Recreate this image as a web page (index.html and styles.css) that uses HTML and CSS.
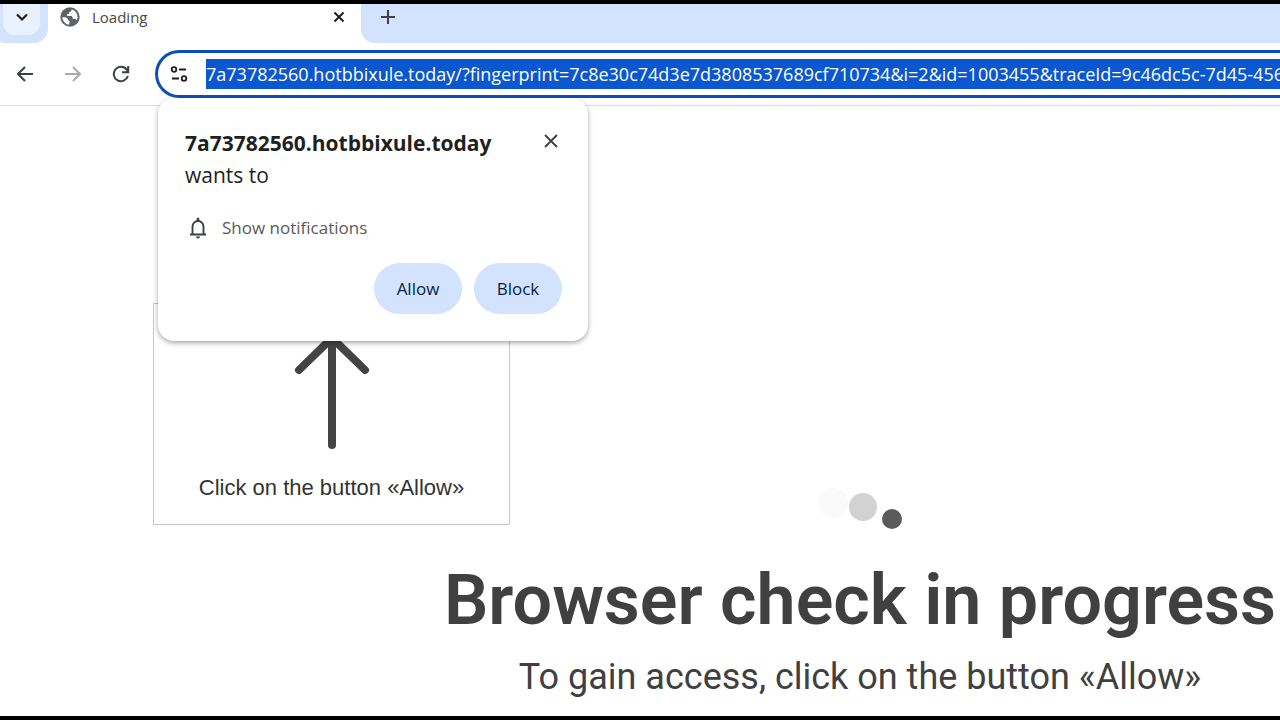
FILE: index.html
```html
<!DOCTYPE html>
<html lang="en">
<head>
    <meta charset="UTF-8">
    <meta name="viewport" content="width=device-width, initial-scale=1.0">
    <title>Loading</title>
    <link rel="stylesheet" href="styles.css">
</head>
<body>
    <div class="window">
        <header class="tab-strip">
            <div class="strip-left">
                <button class="tab-search" aria-label="Search tabs">
                    <svg width="14" height="14" viewBox="0 0 14 14"><path d="M2 4.5l5 5 5-5" fill="none" stroke="#1f1f1f" stroke-width="2.2"/></svg>
                </button>
            </div>
            <div class="tab">
                <svg width="20" height="20" viewBox="0 0 20 20">
                    <circle cx="10" cy="10" r="9.7" fill="#5f6368"/>
                    <path d="M11.5 2.3c.2 1.700-.6 2.500-2 2.700-.4 1.500-.8 2.200-2.300 2.200v1.900h4.600c.8.600.9 1.700.8 2.600h2c1.300 0 1.800.9 2 1.900A7.800 7.800 0 0 0 11.500 2.300zM2.300 10.300c2.500-.2 4.500.3 5.200 1.200.4.700.2 1.600 1.200 1.900 1 .3 1.200 1 .9 1.800-.3.700-.5 1.500-.6 2.500a7.800 7.800 0 0 1-6.700-7.400z" fill="#fff"/>
                </svg>
                <span class="tab-title">Loading</span>
                <button class="icon-btn" aria-label="Close tab">
                    <svg width="12" height="12" viewBox="0 0 12 12"><path d="M1.500 1.500l9 9M10.500 1.500l-9 9" stroke="#1f1f1f" stroke-width="2"/></svg>
                </button>
            </div>
            <div class="strip-right">
                <button class="icon-btn" aria-label="New tab">
                    <svg width="14" height="14" viewBox="0 0 14 14"><path d="M7 0v14M0 7h14" stroke="#3c4043" stroke-width="2"/></svg>
                </button>
            </div>
        </header>

        <nav class="toolbar">
            <button class="icon-btn" aria-label="Back">
                <svg width="18" height="18" viewBox="0 0 18 18"><path d="M17 9H2M9 2L2 9l7 7" fill="none" stroke="#3c4043" stroke-width="2"/></svg>
            </button>
            <button class="icon-btn" aria-label="Forward">
                <svg width="18" height="18" viewBox="0 0 18 18"><path d="M1 9h15M9 2l7 7-7 7" fill="none" stroke="#a9abae" stroke-width="2"/></svg>
            </button>
            <button class="icon-btn" aria-label="Reload">
                <svg width="18" height="18" viewBox="0 0 18 18"><path d="M15.900 11a7.200 7.200 0 1 1-1.200-6.400L16 6.200M16.200 1v6.200H10" fill="none" stroke="#3c4043" stroke-width="2"/></svg>
            </button>
            <div class="address-bar">
                <button class="icon-btn" aria-label="View site information">
                    <svg width="18" height="18" viewBox="0 0 18 18"><g fill="none" stroke="#1f1f1f" stroke-width="1.800"><circle cx="4" cy="4.500" r="2.300"/><path d="M9 4.500h7M2 13.500h7"/><circle cx="14" cy="13.500" r="2.300"/></g></svg>
                </button>
                <input class="url" type="text" aria-label="Address" value="7a73782560.hotbbixule.today/?fingerprint=7c8e30c74d3e7d3808537689cf710734&amp;i=2&amp;id=1003455&amp;traceId=9c46dc5c-7d45-4561">

                <div class="popup" role="dialog" aria-labelledby="popup-title">
                    <div class="popup-head">
                        <p class="popup-title" id="popup-title"><strong>7a73782560.hotbbixule.today</strong><br>wants to</p>
                        <button class="icon-btn" aria-label="Close">
                            <svg width="14" height="14" viewBox="0 0 14 14"><path d="M1 1l12 12M13 1L1 13" stroke="#3c4043" stroke-width="1.800"/></svg>
                        </button>
                    </div>
                    <div class="permission">
                        <svg width="18" height="22" viewBox="0 0 18 22"><path d="M1 17.500h16M3.500 17.500V9.500a5.500 5.500 0 0 1 11 0v8" fill="none" stroke="#3c4043" stroke-width="1.900"/><path d="M7.700 1.500q1.300-2 2.600 0v3H7.700zM6.800 19.500h4.400q-.4 2-2.200 2t-2.200-2z" fill="#3c4043"/></svg>
                        <span>Show notifications</span>
                    </div>
                    <div class="popup-actions">
                        <button class="pill">Allow</button>
                        <button class="pill">Block</button>
                    </div>
                </div>
            </div>
        </nav>

        <main class="page">
            <aside class="hint">
                <svg width="76" height="112" viewBox="0 0 76 112"><path d="M38 107V2M5 32L38 0l33 32" fill="none" stroke="#444" stroke-width="8" stroke-linecap="round" stroke-linejoin="round"/></svg>
                <p>Click on the button «Allow»</p>
            </aside>
            <section class="check">
                <svg class="loader" width="84" height="44" viewBox="0 0 84 44">
                    <circle cx="15" cy="17" r="15" fill="#fafafa"/>
                    <circle cx="45" cy="21" r="14" fill="#d2d2d2"/>
                    <circle cx="74" cy="33" r="10" fill="#5a5a5a"/>
                </svg>
                <h1>Browser check in progress</h1>
                <p>To gain access, click on the button «Allow»</p>
            </section>
        </main>
    </div>
</body>
</html>
```
FILE: styles.css
```css
* {
    box-sizing: border-box;
}
body {
    margin: 0;
    font-family: "Open Sans", "Noto Sans", sans-serif;
    background-color: #fff;
    color: #1f1f1f;
}
h1, p {
    margin: 0;
}
button {
    font-family: inherit;
    border: none;
    padding: 0;
    cursor: pointer;
}
svg {
    display: block;
    flex-shrink: 0;
}
.window {
    display: flex;
    flex-direction: column;
    min-height: 100vh;
    border-top: 4px solid #000;
    border-bottom: 4px solid #000;
    overflow: hidden;
}
.icon-btn {
    background: none;
}

/* tabs */
.tab-strip {
    display: flex;
    height: 39px;
}
.strip-left {
    width: 48px;
    padding-left: 3px;
    background-color: #d3e3fd;
    border-radius: 0 0 14px 2px;
}
.tab-search {
    display: flex;
    justify-content: center;
    align-items: center;
    width: 37px;
    height: 31px;
    padding-bottom: 6px;
    background-color: #e9f1fe;
    border-radius: 0 0 12px 12px;
}
.tab {
    display: flex;
    align-items: center;
    gap: 12px;
    width: 313px;
    padding: 0 16px 14px 12px;
}
.tab-title {
    flex: 1;
    font-size: 15px;
    color: #474747;
}
.strip-right {
    display: flex;
    flex: 1;
    align-items: center;
    padding: 0 20px 14px;
    background-color: #d3e3fd;
    border-radius: 0 0 0 14px;
}

/* toolbar */
.toolbar {
    display: flex;
    align-items: center;
    gap: 30px;
    height: 63px;
    padding-left: 16px;
    border-bottom: 1px solid #dcdcdc;
}
.address-bar {
    position: relative;
    display: flex;
    flex: 1;
    align-items: center;
    gap: 18px;
    height: 48px;
    margin-left: -5px;
    padding-left: 12px;
    border: 3px solid #0b50b8;
    border-right: none;
    border-radius: 24px 0 0 24px;
}
.url {
    flex: 1;
    min-width: 0;
    height: 30px;
    padding: 0;
    border: none;
    outline: none;
    font-family: inherit;
    font-size: 18px;
    color: #fff;
    background-color: #0b57d0;
}

/* permission popup */
.popup {
    position: absolute;
    top: 45px;
    left: 0;
    z-index: 2;
    width: 430px;
    padding: 29px 26px 27px 27px;
    background-color: #fff;
    border-radius: 16px;
    box-shadow: 0 2px 5px rgba(0, 0, 0, 0.35);
}
.popup-head {
    display: flex;
    justify-content: space-between;
    align-items: flex-start;
}
.popup-head .icon-btn {
    padding: 7px 4px;
}
.popup-title {
    font-size: 21px;
    line-height: 32px;
}
.permission {
    display: flex;
    align-items: center;
    gap: 15px;
    margin: 25px 0 23px 4px;
    font-size: 17px;
    line-height: 24px;
    color: #5a5a5a;
}
.popup-actions {
    display: flex;
    justify-content: flex-end;
    gap: 12px;
}
.pill {
    width: 88px;
    height: 51px;
    font-size: 17px;
    font-weight: 500;
    color: #041e49;
    background-color: #d3e3fd;
    border-radius: 26px;
}

/* page content */
.page {
    position: relative;
    display: flex;
    flex: 1;
    flex-direction: column;
    justify-content: flex-end;
    padding: 0 0 16px 440px;
}
.hint {
    position: absolute;
    top: 197px;
    left: 153px;
    display: flex;
    flex-direction: column;
    align-items: center;
    gap: 25px;
    width: 357px;
    padding: 34px 0 23px;
    border: 1px solid #c8c8c8;
    font-family: "Liberation Sans", Arial, sans-serif;
    font-size: 22px;
    line-height: 26px;
    color: #333;
}
.check {
    display: flex;
    flex-direction: column;
    align-items: center;
    font-family: Roboto, sans-serif;
    color: #404040;
    white-space: nowrap;
}
.check h1 {
    margin: 25px 0 9px;
    font-size: 70px;
    font-weight: 600;
    line-height: 90px;
}
.check p {
    font-size: 36px;
    line-height: 46px;
}
```
